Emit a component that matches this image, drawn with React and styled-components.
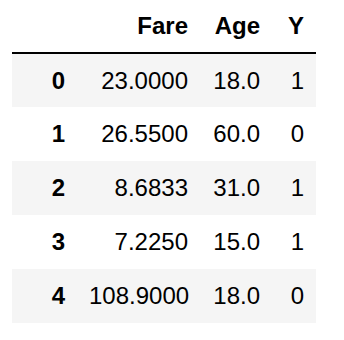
import React from 'react';
import styled, { createGlobalStyle } from 'styled-components';

// Rows of the frame, as pandas prints them
const rows = [
    { index: 0, fare: '23.0000', age: '18.0', y: 1 },
    { index: 1, fare: '26.5500', age: '60.0', y: 0 },
    { index: 2, fare: '8.6833', age: '31.0', y: 1 },
    { index: 3, fare: '7.2250', age: '15.0', y: 1 },
    { index: 4, fare: '108.9000', age: '18.0', y: 0 },
];

const GlobalStyle = createGlobalStyle`
    html, body {
        margin: 0;
        padding: 0;
        background: #ffffff;
    }
    body {
        font-family: "Liberation Sans", Arial, sans-serif;
        color: #000000;
    }
`;

const App = () => {
    return (
        <>
            <GlobalStyle />
            <Page>
                <Frame>
                    <colgroup>
                        <col style={{ width: 65 }} />
                        <col style={{ width: 123 }} />
                        <col style={{ width: 72 }} />
                        <col style={{ width: 44 }} />
                    </colgroup>
                    <Head>
                        <tr>
                            <HeadCell></HeadCell>
                            <HeadCell>Fare</HeadCell>
                            <HeadCell>Age</HeadCell>
                            <HeadCell>Y</HeadCell>
                        </tr>
                    </Head>
                    <tbody>
                        {rows.map((row) => (
                            <Row key={row.index} striped={row.index % 2 === 0}>
                                <IndexCell>{row.index}</IndexCell>
                                <Cell>{row.fare}</Cell>
                                <Cell>{row.age}</Cell>
                                <Cell>{row.y}</Cell>
                            </Row>
                        ))}
                    </tbody>
                </Frame>
            </Page>
        </>
    );
};

const Page = styled.div`
    padding: 0 0 0 12px;
`;

const Frame = styled.table`
    border-collapse: collapse;
    border-spacing: 0;
    table-layout: fixed;
    width: 304px;
    font-size: 24px;
`;

const Head = styled.thead`
    border-bottom: 2px solid #000000;
`;

const HeadCell = styled.th`
    height: 53px;
    padding: 0 12px;
    text-align: right;
    vertical-align: middle;
    font-weight: bold;
    line-height: 30px;
    box-sizing: border-box;
`;

const Row = styled.tr.withConfig({ shouldForwardProp: (p) => p !== 'striped' })`
    background: ${(p) => (p.striped ? '#f5f5f5' : '#ffffff')};
`;

const Cell = styled.td`
    height: 54px;
    padding: 0 12px;
    text-align: right;
    vertical-align: middle;
    line-height: 30px;
    box-sizing: border-box;
`;

const IndexCell = styled(Cell).attrs({ as: 'th' })`
    font-weight: bold;
`;

export default App;
